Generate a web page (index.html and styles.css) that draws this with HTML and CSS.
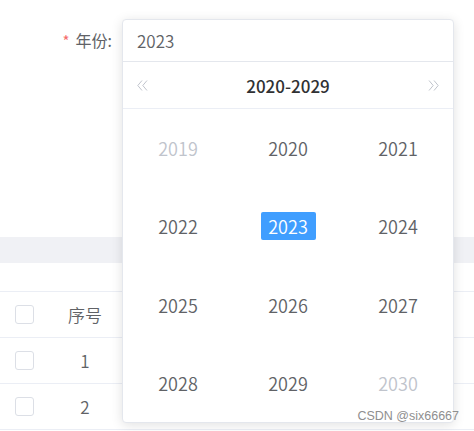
FILE: index.html
```html
<!DOCTYPE html>
<html lang="zh">
<head>
<meta charset="utf-8">
<title>年份选择</title>
<link rel="stylesheet" href="styles.css">
</head>
<body>
<div class="page">
  <div class="form">
    <div class="form-item">
      <label class="label"><span class="req">*</span>年份:</label>
      <div class="picker">
        <div class="panel">
          <div class="panel-input">2023</div>
          <div class="panel-head">
            <svg class="arrow" width="11" height="11" viewBox="0 0 11 11"><polyline points="5,0.5 0.8,5.5 5,10.5" fill="none" stroke="#c0c4cc" stroke-width="1"/><polyline points="10,0.5 5.8,5.5 10,10.5" fill="none" stroke="#c0c4cc" stroke-width="1"/></svg>
            <span class="title">2020-2029</span>
            <svg class="arrow" width="11" height="11" viewBox="0 0 11 11"><polyline points="1,0.5 5.2,5.5 1,10.5" fill="none" stroke="#c0c4cc" stroke-width="1"/><polyline points="6,0.5 10.2,5.5 6,10.5" fill="none" stroke="#c0c4cc" stroke-width="1"/></svg>
          </div>
          <div class="years">
            <div class="cell"><span class="year off">2019</span></div>
            <div class="cell"><span class="year">2020</span></div>
            <div class="cell"><span class="year">2021</span></div>
            <div class="cell"><span class="year">2022</span></div>
            <div class="cell"><span class="year current">2023</span></div>
            <div class="cell"><span class="year">2024</span></div>
            <div class="cell"><span class="year">2025</span></div>
            <div class="cell"><span class="year">2026</span></div>
            <div class="cell"><span class="year">2027</span></div>
            <div class="cell"><span class="year">2028</span></div>
            <div class="cell"><span class="year">2029</span></div>
            <div class="cell"><span class="year off">2030</span></div>
          </div>
        </div>
      </div>
    </div>
  </div>
  <div class="band"></div>
  <div class="table">
    <div class="row head">
      <div class="c-check"><span class="checkbox"></span></div>
      <div class="c-index">序号</div>
      <div class="c-rest"></div>
    </div>
    <div class="row">
      <div class="c-check"><span class="checkbox"></span></div>
      <div class="c-index">1</div>
      <div class="c-rest"></div>
    </div>
    <div class="row">
      <div class="c-check"><span class="checkbox"></span></div>
      <div class="c-index">2</div>
      <div class="c-rest"></div>
    </div>
  </div>
  <div class="watermark">CSDN @six66667</div>
</div>
</body>
</html>
```
FILE: styles.css
```css
html, body {
  margin: 0;
  padding: 0;
  background: #fff;
}
body {
  font-family: "Noto Sans CJK SC", "Noto Sans", sans-serif;
  color: #606266;
}
.page {
  position: relative;
  width: 474px;
  height: 431px;
  overflow: hidden;
}
.form {
  height: 237px;
  padding-top: 19px;
  box-sizing: border-box;
}
.form-item {
  display: flex;
  align-items: center;
  height: 42px;
}
.label {
  width: 122px;
  box-sizing: border-box;
  padding-right: 10px;
  text-align: right;
  font-size: 16px;
  color: #606266;
}
.req {
  color: #f56c6c;
  margin-right: 6px;
  font-size: 15px;
}
.picker {
  position: relative;
  width: 332px;
  height: 42px;
  z-index: 2;
}
.panel {
  position: absolute;
  left: 0;
  top: 0;
  width: 332px;
  height: 404px;
  box-sizing: border-box;
  background: #fff;
  border: 1px solid #e4e7ed;
  border-radius: 4px;
  box-shadow: 0 2px 12px 0 rgba(0, 0, 0, 0.12);
  display: flex;
  flex-direction: column;
}
.panel-input {
  height: 41px;
  border-bottom: 1px solid #e4e7ed;
  padding-left: 14px;
  line-height: 41px;
  font-size: 17px;
  font-weight: 350;
  color: #606266;
}
.panel-head {
  height: 46px;
  border-bottom: 1px solid #ebeef5;
  display: flex;
  align-items: center;
  justify-content: space-between;
  padding: 0 14px;
}
.title {
  font-size: 17px;
  font-weight: 500;
  color: #303133;
}
.years {
  flex: 1;
  display: grid;
  grid-template-columns: repeat(3, 1fr);
  grid-template-rows: repeat(4, 1fr);
}
.cell {
  display: flex;
  align-items: center;
  justify-content: center;
}
.year {
  display: inline-flex;
  align-items: center;
  justify-content: center;
  width: 55px;
  height: 28px;
  border-radius: 2px;
  font-size: 18px;
  font-weight: 350;
  color: #606266;
}
.year.off {
  color: #c0c4cc;
}
.year.current {
  background: #409eff;
  color: #fff;
}
.band {
  height: 26px;
  background: #f0f1f5;
}
.table {
  margin-top: 28px;
  border-top: 1px solid #ebeef5;
}
.row {
  display: flex;
  height: 45px;
  border-bottom: 1px solid #ebeef5;
  align-items: center;
  font-size: 17px;
  color: #606266;
}
.c-check {
  width: 48px;
  display: flex;
  justify-content: center;
}
.c-index {
  width: 74px;
  text-align: center;
  font-weight: 350;
}
.c-rest {
  flex: 1;
}
.checkbox {
  display: block;
  width: 17px;
  height: 17px;
  border: 1px solid #dcdfe6;
  border-radius: 3px;
  background: #fff;
}
.watermark {
  position: absolute;
  right: 15px;
  bottom: 8px;
  z-index: 3;
  font-family: "Liberation Sans", Arial, sans-serif;
  font-size: 12.5px;
  color: #8f8f8f;
}
```
